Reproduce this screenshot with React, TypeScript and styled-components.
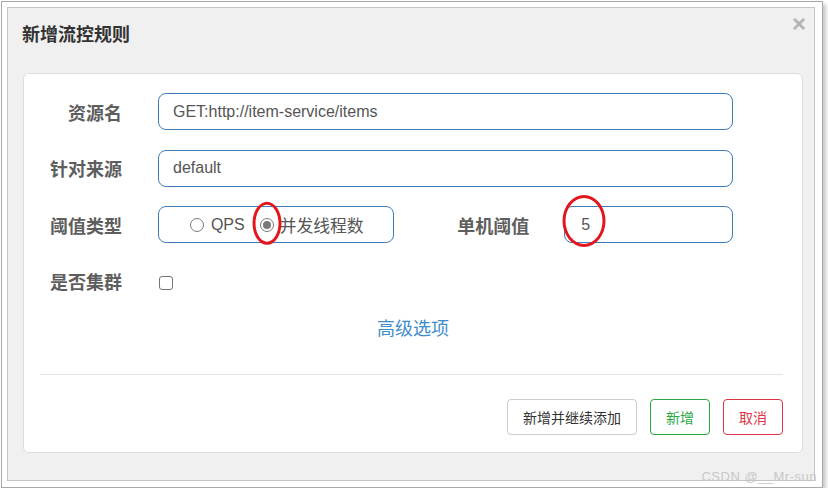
import React, { useState } from 'react'
import styled, { createGlobalStyle } from 'styled-components'

const GlobalStyle = createGlobalStyle`
  html, body {
    margin: 0;
    padding: 0;
    background: #ffffff;
  }
  body {
    font-family: "Liberation Sans", "Noto Sans CJK SC", sans-serif;
  }
`

const CJK = `"Liberation Sans", "Noto Sans CJK SC", sans-serif`

const App = () => {
  const [grade, setGrade] = useState<'qps' | 'thread'>('thread')
  const [cluster, setCluster] = useState(false)

  return (
    <>
      <GlobalStyle />
      <Frame>
        <Dialog>
          <Header>
            <Title>新增流控规则</Title>
            <CloseButton type="button">×</CloseButton>
          </Header>
          <Panel>
            <Form>
              <Label>资源名</Label>
              <TextInput defaultValue="GET:http://item-service/items" />

              <Label>针对来源</Label>
              <TextInput defaultValue="default" />

              <Label>阈值类型</Label>
              <SplitRow>
                <RadioBox>
                  <RadioOption onClick={() => setGrade('qps')}>
                    <RadioDot $checked={grade === 'qps'} />
                    <span>QPS</span>
                  </RadioOption>
                  <RadioOption $gap={6} onClick={() => setGrade('thread')}>
                    <RadioDot $checked={grade === 'thread'}>
                      <Mark $w={29} $h={43} />
                    </RadioDot>
                    <CjkText>并发线程数</CjkText>
                  </RadioOption>
                </RadioBox>
                <Label>单机阈值</Label>
                <FieldWrap>
                  <TextInput defaultValue="5" />
                  <Mark $w={43} $h={52} style={{ left: 20, top: 17 }} />
                </FieldWrap>
              </SplitRow>

              <Label>是否集群</Label>
              <CheckRow>
                <CheckBox $checked={cluster} onClick={() => setCluster(!cluster)} />
              </CheckRow>
            </Form>

            <AdvancedLink href="#">高级选项</AdvancedLink>
            <Divider />

            <Footer>
              <Button type="button">新增并继续添加</Button>
              <Button type="button" $tone="#28a745">新增</Button>
              <Button type="button" $tone="#dc3545">取消</Button>
            </Footer>
          </Panel>
        </Dialog>
        <Watermark>CSDN @__Mr-sun</Watermark>
      </Frame>
    </>
  )
}

export default App

const Frame = styled.div`
  position: relative;
  box-sizing: border-box;
  width: 822px;
  height: 487px;
  margin: 1px 0 0 1px;
  padding: 5px 0 0 5px;
  border: 1px solid #a8a8a8;
  background: #ffffff;
  box-shadow: 3px 3px 4px rgba(0, 0, 0, 0.22);
`

const Dialog = styled.div`
  position: relative;
  box-sizing: border-box;
  width: 808px;
  height: 474px;
  padding: 0 11px 0 15px;
  border: 1px solid #c4c4c4;
  background: #f0f0f0;
`

const Header = styled.div`
  box-sizing: border-box;
  height: 65px;
  padding: 16px 0 0 0;
`

const Title = styled.h4`
  margin: 0 0 0 -1px;
  font-family: ${CJK};
  font-size: 18px;
  line-height: 22px;
  font-weight: bold;
  color: #333333;
`

const CloseButton = styled.button`
  position: absolute;
  top: 4px;
  right: 8px;
  padding: 0;
  border: none;
  background: transparent;
  font-family: "Liberation Sans", sans-serif;
  font-size: 24px;
  line-height: 24px;
  font-weight: bold;
  color: #b4b4b4;
  cursor: pointer;
`

const Panel = styled.div`
  box-sizing: border-box;
  display: flex;
  flex-direction: column;
  width: 780px;
  height: 380px;
  border: 1px solid #dddddd;
  border-radius: 6px;
  background: #ffffff;
`

const Form = styled.div`
  display: grid;
  grid-template-columns: 98px 575px;
  column-gap: 36px;
  row-gap: 19.5px;
  grid-auto-rows: 37px;
  padding-top: 19px;
`

const Label = styled.label`
  display: flex;
  align-items: center;
  justify-content: flex-end;
  width: 76px;
  justify-self: end;
  font-family: ${CJK};
  font-size: 18px;
  font-weight: bold;
  color: #5e5e5e;
  white-space: nowrap;
`

const TextInput = styled.input`
  box-sizing: border-box;
  width: 100%;
  height: 37px;
  padding: 0 14px;
  border: 1px solid #3e7cb8;
  border-radius: 8px;
  outline: none;
  background: #ffffff;
  font-family: "Liberation Sans", sans-serif;
  font-size: 16px;
  color: #555555;
`

const SplitRow = styled.div`
  display: flex;
  align-items: stretch;

  & > ${Label} {
    margin-left: 60px;
    margin-right: 35px;
  }
`

const RadioBox = styled.div`
  box-sizing: border-box;
  display: flex;
  align-items: center;
  justify-content: center;
  gap: 15px;
  width: 236px;
  border: 1px solid #3e7cb8;
  border-radius: 8px;
  padding-left: 2px;
`

const RadioOption = styled.label<{ $gap?: number }>`
  display: flex;
  align-items: center;
  gap: ${p => p.$gap ?? 7}px;
  font-family: ${CJK};
  font-size: 16px;
  color: #555555;
  cursor: pointer;
`

const CjkText = styled.span`
  font-size: 16.8px;
`

const RadioDot = styled.span<{ $checked: boolean }>`
  position: relative;
  box-sizing: border-box;
  display: inline-flex;
  align-items: center;
  justify-content: center;
  width: 14px;
  height: 14px;
  border: 1px solid #7a7a7a;
  border-radius: 50%;
  background: #ffffff;

  &::after {
    content: '';
    display: ${p => (p.$checked ? 'block' : 'none')};
    width: 8px;
    height: 8px;
    border-radius: 50%;
    background: #7a7a7a;
  }
`

const Mark = styled.span<{ $w: number; $h: number }>`
  position: absolute;
  left: 50%;
  top: 50%;
  width: ${p => p.$w}px;
  height: ${p => p.$h}px;
  transform: translate(-50%, -54%);
  box-sizing: border-box;
  border: 3px solid #e3161d;
  border-radius: 50%;
  pointer-events: none;
`

const FieldWrap = styled.div`
  position: relative;
  width: 169px;

  & > ${TextInput} {
    padding-left: 16px;
  }
`

const CheckRow = styled.div`
  display: flex;
  align-items: center;
  padding-left: 1px;
  padding-top: 3px;
`

const CheckBox = styled.span<{ $checked: boolean }>`
  box-sizing: border-box;
  width: 14px;
  height: 14px;
  border: 1px solid #767676;
  border-radius: 3px;
  background: ${p => (p.$checked ? '#767676' : '#ffffff')};
  cursor: pointer;
`

const AdvancedLink = styled.a`
  align-self: center;
  margin-top: 17px;
  font-family: ${CJK};
  font-size: 18px;
  line-height: 24px;
  color: #3d8ccc;
  text-decoration: none;
`

const Divider = styled.hr`
  width: 743px;
  margin: 33px 0 0 16px;
  border: none;
  border-top: 1px solid #e2e2e2;
`

const Footer = styled.div`
  display: flex;
  justify-content: flex-end;
  gap: 13px;
  margin-top: 24px;
  padding-right: 19px;
`

const Button = styled.button<{ $tone?: string }>`
  box-sizing: border-box;
  height: 36px;
  padding: 0 15px;
  border: 1px solid ${p => p.$tone ?? '#cccccc'};
  border-radius: 4px;
  background: #ffffff;
  font-family: ${CJK};
  font-size: 14px;
  color: ${p => p.$tone ?? '#333333'};
  cursor: pointer;
`

const Watermark = styled.span`
  position: absolute;
  right: 5px;
  bottom: 3px;
  font-family: "Liberation Sans", sans-serif;
  font-size: 13px;
  color: #c8c8c8;
  letter-spacing: 0.5px;
  pointer-events: none;
`
